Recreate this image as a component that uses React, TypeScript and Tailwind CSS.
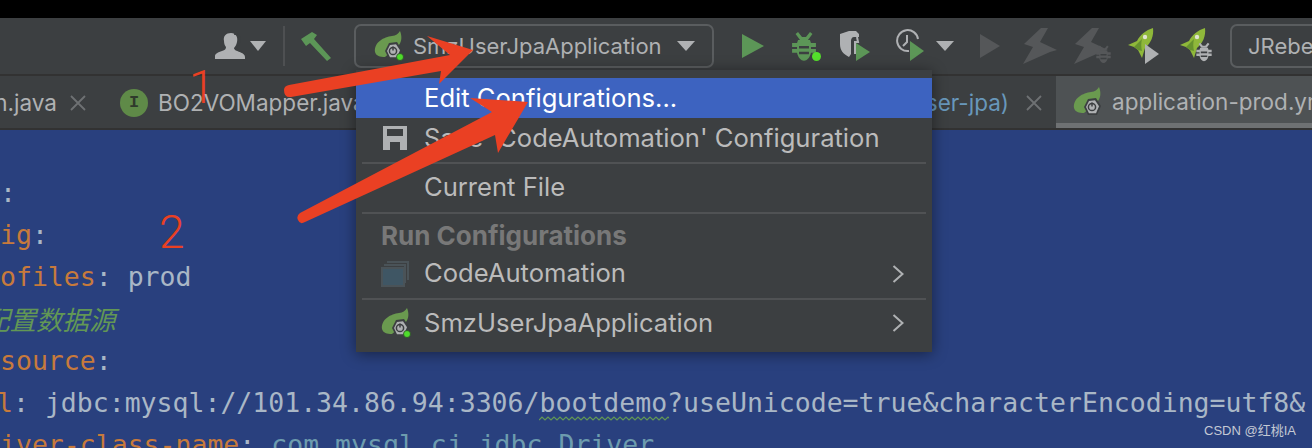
const uiFont = "font-['Inter','Liberation_Sans',sans-serif]";

function SpringIcon({ dot = false }: { dot?: boolean }) {
    return (
        <svg width="32" height="32" viewBox="0 0 32 32" className="shrink-0">
            <path d="M1 22C0 12 10 7 18 6c4-.5 6-2 8-5 2 5 2 10-1 14L11 27C6 27 2 26 1 22z" fill="#6a9a4f" />
            <path d="M15 13l8-1 5 8-4 9h-9l-4-8z" fill="#3c3f41" />
            <path d="M16 15l6-.7 4 6-3 7h-7l-3-6.300z" fill="#afb1b3" />
            <circle cx="19" cy="21" r="3.600" fill="none" stroke="#3c3f41" strokeWidth="1.500" />
            <path d="M19 16.500v4" stroke="#3c3f41" strokeWidth="1.500" />
            {dot && <circle cx="26" cy="27" r="3.500" fill="#4fdc2c" stroke="#2f4a2a" strokeWidth="0.800" />}
        </svg>
    );
}

function Caret({ w = 18 }: { w?: number }) {
    return (
        <svg width={w} height="10" viewBox="0 0 18 10" preserveAspectRatio="none" className="shrink-0">
            <path d="M0 0h18L9 10z" fill="#afb1b3" />
        </svg>
    );
}

function Chevron() {
    return (
        <svg width="12" height="18" viewBox="0 0 12 18" className="ml-auto mr-[28px] shrink-0">
            <path d="M1.500 1l9 8-9 8" fill="none" stroke="#afb1b3" strokeWidth="2" />
        </svg>
    );
}

function CloseX({ className = "" }: { className?: string }) {
    return (
        <svg width="16" height="16" viewBox="0 0 16 16" className={"shrink-0 " + className}>
            <path d="M1 1l14 14M15 1L1 15" stroke="#6e7173" strokeWidth="1.800" />
        </svg>
    );
}

function Bug({ color, w = 28 }: { color: string; w?: number }) {
    return (
        <svg width={w} height={w * 1.1} viewBox="0 0 28 31" className="shrink-0">
            <path d="M8 1l4 5h4l4-5 2.500 2L18 9h-8L5.500 3z" fill={color} />
            <path d="M8 9h12l1 3h5v4h-5v2h5v4h-5c-1 5-4 8-7 8s-6-3-7-8H2v-4h5v-2H2v-4h5z" fill={color} />
            <path d="M9 15h10v2.500H9zM9 21h10v2.500H9z" fill="#3c3f41" />
        </svg>
    );
}

function Rocket({ children }: { children: React.ReactNode }) {
    return (
        <div className="relative w-[32px] h-[36px] shrink-0">
            <svg width="26" height="30" viewBox="0 0 26 30" className="absolute left-0 top-0">
                <path d="M25 0c1 8-2 15-8 20l-3 10-4-8-4-3-6-2 9-4C12 7 18 2 25 0z" fill="#8fb83a" />
                <path d="M14 11c-1 4-1 8 0 12l-4-1-4-3z" fill="#66922e" />
                <circle cx="17" cy="9" r="2.200" fill="#e0e4d0" />
            </svg>
            {children}
        </div>
    );
}

function Bolt({ color = "#555759" }: { color?: string }) {
    return (
        <svg width="34" height="36" viewBox="0 0 34 36" className="shrink-0">
            <path d="M18 0h7l-8 14 17 8-7 2-27 12 10-17-9-3z" fill={color} />
        </svg>
    );
}

function Tab({ icon, children, close, className = "" }: { icon?: React.ReactNode; children: React.ReactNode; close?: boolean; className?: string }) {
    return (
        <div className={"flex items-center shrink-0 h-full whitespace-nowrap " + className}>
            {icon}
            {children}
            {close && <CloseX className="ml-[17px]" />}
        </div>
    );
}

function MenuDivider() {
    return <div className="h-[2px] mx-[6px] bg-[#505254] shrink-0" />;
}

function MenuRow({ icon, label, arrow, className = "" }: { icon?: React.ReactNode; label: string; arrow?: boolean; className?: string }) {
    return (
        <div className={"flex items-center shrink-0 text-[#bbbbbb] " + className}>
            <div className="w-[68px] pl-[27px] flex items-center shrink-0">{icon}</div>
            <span>{label}</span>
            {arrow && <Chevron />}
        </div>
    );
}

function CodeLine({ children, className = "" }: { children: React.ReactNode; className?: string }) {
    return <div className={"h-[42px] leading-[42px] whitespace-pre shrink-0 " + className}>{children}</div>;
}

export default function App() {
    const key = "text-[#c77a3c]";
    const val = "text-[#a9b7c6]";

    return (
        <div className={"relative w-[1312px] h-[448px] overflow-hidden flex flex-col bg-[#29407e] " + uiFont}>
            <div className="h-[18px] bg-black shrink-0" />

            {/* Toolbar */}
            <div className="h-[56px] bg-[#3c3f41] shrink-0 flex items-center text-[22px] text-[#afb1b3] overflow-hidden">
                <svg width="30" height="28" viewBox="0 0 30 28" className="ml-[215px] shrink-0">
                    <path d="M16 1c5 0 7 4 6 9-.5 3-2 5-3 6 0 2 3 3 6 4 3 1 5 3 5 5v2H0v-3c0-2 3-4 7-5 3-1 4-2 4-4-1-1-2-3-2-6-1-5 2-8 7-8z" fill="#afb1b3" />
                    <path d="M19 2c5 0 7 4 5 9 0 2-2 4-3 5 0 2 3 3 6 4" fill="none" stroke="#3c3f41" strokeWidth="1.500" />
                </svg>
                <div className="ml-[5px]"><Caret w={16} /></div>
                <div className="w-[2px] h-[40px] bg-[#4e5052] ml-[17px] shrink-0" />
                <svg width="32" height="30" viewBox="0 0 32 30" className="ml-[15px] shrink-0">
                    <path d="M1 8l11-7 5 3-3 4 17 19-4 3L10 12l-4 3z" fill="#5c9657" />
                </svg>
                <div className="ml-[22px] w-[360px] h-[44px] shrink-0 border-2 border-[#5a5d5f] rounded-[7px] flex items-center pl-[18px]">
                    <SpringIcon dot />
                    <span className="ml-[7px]">SmzUserJpaApplication</span>
                    <div className="ml-auto mr-[17px]"><Caret /></div>
                </div>
                <svg width="22" height="24" viewBox="0 0 22 24" className="ml-[28px] shrink-0">
                    <path d="M0 0l22 12L0 24z" fill="#5c9657" />
                </svg>
                <div className="relative ml-[26px] shrink-0 flex">
                    <Bug color="#5c9657" />
                    <div className="absolute w-[9px] h-[9px] rounded-full bg-[#54e02c] right-[-3px] bottom-[0px]" />
                </div>
                <svg width="30" height="32" viewBox="0 0 30 32" className="ml-[22px] shrink-0">
                    <path d="M0 4l9-3h7l3 3v3h-5c-2 0-3 2-3 4v13l-2 3C3 24 0 20 0 14z" fill="#afb1b3" />
                    <path d="M17 7l1 5-3 0v12" fill="none" stroke="#afb1b3" strokeWidth="2" />
                    <path d="M16 13l14 9-14 9z" fill="#5c9657" />
                </svg>
                <svg width="30" height="34" viewBox="0 0 30 34" className="ml-[24px] shrink-0">
                    <path d="M15 22a10.500 10.500 0 1 1 9-12" fill="none" stroke="#afb1b3" strokeWidth="2" />
                    <path d="M13 6v7l-4 4" fill="none" stroke="#afb1b3" strokeWidth="2" />
                    <path d="M16 12l14 10-14 10z" fill="#5c9657" />
                </svg>
                <div className="ml-[12px]"><Caret /></div>
                <svg width="20" height="24" viewBox="0 0 20 24" className="ml-[26px] shrink-0">
                    <path d="M0 0l20 12L0 24z" fill="#555759" />
                </svg>
                <div className="ml-[23px] flex"><Bolt /></div>
                <div className="ml-[17px] relative flex w-[36px] h-[36px] shrink-0">
                    <Bolt />
                    <div className="absolute right-[-2px] bottom-[0px]"><Bug color="#555759" w={17} /></div>
                </div>
                <div className="ml-[18px]">
                    <Rocket>
                        <svg width="14" height="20" viewBox="0 0 14 20" className="absolute left-[17px] top-[16px]">
                            <path d="M0 0l14 10L0 20z" fill="#afb1b3" />
                        </svg>
                    </Rocket>
                </div>
                <div className="ml-[20px]">
                    <Rocket>
                        <div className="absolute left-[15px] top-[14px]"><Bug color="#afb1b3" w={18} /></div>
                    </Rocket>
                </div>
                <div className="ml-[18px] w-[120px] h-[44px] shrink-0 border-2 border-[#5a5d5f] rounded-[7px] flex items-center pl-[16px]">
                    JRebel
                </div>
            </div>

            <div className="h-[2px] bg-[#323232] shrink-0" />

            {/* Tabs */}
            <div className="h-[52px] bg-[#3c3f41] shrink-0 flex items-center text-[22.500px] text-[#afb1b3] overflow-hidden relative">
                <Tab close className="w-[120px] pt-[2px]">
                    <div className="w-[57px] mr-[-4px] flex justify-end overflow-hidden"><span>n.java</span></div>
                </Tab>
                <Tab
                    className="w-[812px] pt-[2px]"
                    icon={
                        <div className="w-[28px] h-[28px] rounded-full bg-[#5f8a48] flex items-center justify-center mr-[10px] font-['Liberation_Mono',monospace] font-bold text-[#2f3a2c] text-[17px]">
                            I
                        </div>
                    }
                >
                    <span>BO2VOMapper.java</span>
                </Tab>
                <Tab close className="w-[124px] justify-end pr-[14px] pt-[2px] text-[#6897bb]">
                    <span>ser-jpa)</span>
                </Tab>
                <Tab
                    className="flex-1 bg-[#4e5254] border-b-[5px] border-[#6e7173] pl-[17px] pt-[5px]"
                    icon={<SpringIcon />}
                >
                    <span className="ml-[7px]">application-prod.yml</span>
                </Tab>
            </div>

            <div className="h-[2px] bg-[#323232] shrink-0" />

            {/* Editor */}
            <div className="flex-1 min-h-0 pt-[42px] flex flex-col font-['DejaVu_Sans_Mono','Noto_Sans_CJK_SC',monospace] text-[26.500px] overflow-hidden">
                <CodeLine className={val}>:</CodeLine>
                <CodeLine><span className={key}>ig</span><span className={val}>:</span></CodeLine>
                <CodeLine><span className={key}>ofiles</span><span className={val}>: prod</span></CodeLine>
                <CodeLine className="italic text-[#629755] ml-[-17px] font-['Noto_Sans_CJK_SC',sans-serif]">配置数据源</CodeLine>
                <CodeLine><span className={key}>source</span><span className={val}>:</span></CodeLine>
                <CodeLine>
                    <span className={key + " ml-[-3px]"}>l</span>
                    <span className={val}>: jdbc:mysql://101.34.86.94:3306/</span>
                    <span className={val + " relative"}>
                        bootdemo
                        <svg width="130" height="6" viewBox="0 0 130 6" className="absolute left-0 top-[29px]">
                            <path d="M0 4l3-3 3 3 3-3 3 3 3-3 3 3 3-3 3 3 3-3 3 3 3-3 3 3 3-3 3 3 3-3 3 3 3-3 3 3 3-3 3 3 3-3 3 3 3-3 3 3 3-3 3 3 3-3 3 3 3-3 3 3 3-3 3 3 3-3 3 3 3-3 3 3 3-3 3 3 3-3 3 3 3-3 3 3 3-3 3 3" fill="none" stroke="#629755" strokeWidth="1.200" />
                        </svg>
                    </span>
                    <span className={val}>?useUnicode=true&amp;characterEncoding=utf8&amp;</span>
                </CodeLine>
                <CodeLine>
                    <span className={key}>iver-class-name</span>
                    <span className={val}>: </span>
                    <span className="text-[#6d9cae]">com.mysql.cj.jdbc.Driver</span>
                </CodeLine>
            </div>

            {/* Popup menu */}
            <div className="absolute left-[356px] top-[70px] w-[576px] h-[282px] bg-[#3c3f41] shadow-[0_2px_14px_rgba(0,0,0,0.45)] flex flex-col text-[25.600px] pt-[8px]">
                <div className="h-[40px] bg-[#3d63c0] text-white flex items-center shrink-0 pl-[68px]">Edit Configurations...</div>
                <MenuRow
                    className="h-[44px] pb-[4px]"
                    label="Save 'CodeAutomation' Configuration"
                    icon={
                        <svg width="24" height="24" viewBox="0 0 24 24">
                            <path d="M0 0h24v24H0z" fill="#afb1b3" />
                            <path d="M4 3h16v7H4zM7 16h10v8H7z" fill="#3c3f41" />
                        </svg>
                    }
                />
                <MenuDivider />
                <MenuRow className="h-[48px] pb-[2px]" label="Current File" />
                <MenuDivider />
                <div className="h-[42px] flex items-center pl-[25px] font-bold text-[#787878] text-[26px] shrink-0">Run Configurations</div>
                <MenuRow
                    className="h-[42px] pb-[7px]"
                    label="CodeAutomation"
                    arrow
                    icon={
                        <svg width="28" height="26" viewBox="0 0 28 26" className="ml-[-2px]">
                            <path d="M6 1h21v18" fill="none" stroke="#4a5358" strokeWidth="2" />
                            <path d="M3 4h21v18" fill="none" stroke="#4a5358" strokeWidth="2" />
                            <rect x="1" y="7" width="22" height="18" fill="#3f5664" stroke="#4a5358" strokeWidth="2" />
                        </svg>
                    }
                />
                <MenuDivider />
                <MenuRow
                    className="h-[48px] pb-[2px]"
                    label="SmzUserJpaApplication"
                    arrow
                    icon={<div className="ml-[-2px] flex"><SpringIcon dot /></div>}
                />
            </div>

            {/* Annotations */}
            <svg width="1312" height="448" viewBox="0 0 1312 448" className="absolute left-0 top-0 pointer-events-none">
                <path d="M284 90q0-4 5-5L450 55 427 36l46 14-34 34 2-13L291 97q-7 1-7-7z" fill="#ea4023" />
                <path d="M298 220q-2-4 2-7L492 112 470 98l58 4-30 51-3-18L305 222q-5 3-7-2z" fill="#ea4023" />
            </svg>
            <span className="absolute left-[189px] top-[59px] text-[46px] leading-[56px] text-[#ea4023] font-['Roboto',sans-serif] font-light">1</span>
            <span className="absolute left-[159px] top-[204px] text-[46px] leading-[56px] text-[#ea4023] font-['Roboto',sans-serif] font-light">2</span>
            <span className="absolute left-[1204px] top-[423px] text-[13px] leading-[16px] text-[#c4c9d4] font-['Liberation_Sans','Noto_Sans_CJK_SC',sans-serif]">CSDN @红桃IA</span>
        </div>
    );
}
